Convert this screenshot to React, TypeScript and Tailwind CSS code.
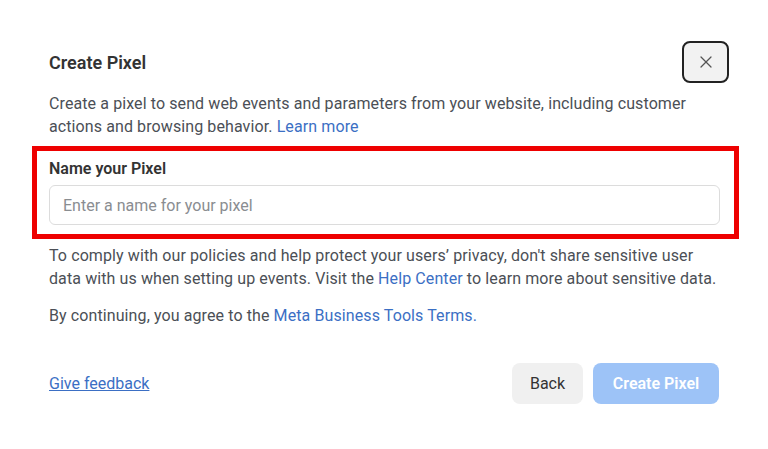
import { X } from "lucide-react";

const linkClass = "text-[#3b6fc4]";

const App = () => {
  return (
    <div className="w-[768px] h-[449px] bg-white font-['Roboto',sans-serif] text-[#4b4f56]">
      <div className="pl-[49px] pr-[49px] pt-[41px]">
        <div className="-mr-[10px] flex items-center justify-between">
          <h1 className="text-[18px] font-semibold text-[#333]">Create Pixel</h1>
          <button className="flex h-[42px] w-[47px] items-center justify-center rounded-lg border-2 border-[#222] bg-[#f2f2f2] text-[#555]">
            <X size={20} strokeWidth={1.5} />
          </button>
        </div>

        <p className="mt-[9px] text-[16px] leading-[23px] tracking-[0.1px]">
          Create a pixel to send web events and parameters from your website, including customer
          <br />
          actions and browsing behavior. <span className={linkClass}>Learn more</span>
        </p>

        <div className="mt-[8px] -ml-[17px] -mr-[20px] border-[5px] border-[#ee0000] pb-[9px] pl-[12px] pr-[14px] pt-[8px]">
          <label className="block text-[16px] font-semibold leading-[20px] text-[#333]">
            Name your Pixel
          </label>
          <input
            className="mt-[6px] block h-[40px] w-full rounded-md border border-[#dcdcdc] px-[13px] text-[16px] text-[#333] outline-none placeholder:text-[#8a8d91]"
            placeholder="Enter a name for your pixel"
          />
        </div>

        <p className="mt-[5px] text-[16px] leading-[23px] tracking-[0.1px]">
          To comply with our policies and help protect your users’ privacy, don't share sensitive user
          <br />
          data with us when setting up events. Visit the <span className={linkClass}>Help Center</span> to
          learn more about sensitive data.
        </p>

        <p className="mt-[14px] text-[16px] leading-[23px] tracking-[0.1px]">
          By continuing, you agree to the <span className={linkClass}>Meta Business Tools Terms.</span>
        </p>

        <div className="mt-[36px] flex items-center justify-between">
          <a className={`${linkClass} text-[16px] underline`} href="#">
            Give feedback
          </a>
          <div className="flex gap-[10px]">
            <button className="h-[41px] w-[71px] rounded-lg bg-[#f0f0f0] text-[16px] text-[#333]">
              Back
            </button>
            <button className="h-[41px] w-[126px] rounded-lg bg-[#9dc3f7] text-[16px] font-semibold text-white">
              Create Pixel
            </button>
          </div>
        </div>
      </div>
    </div>
  );
};

export default App;
